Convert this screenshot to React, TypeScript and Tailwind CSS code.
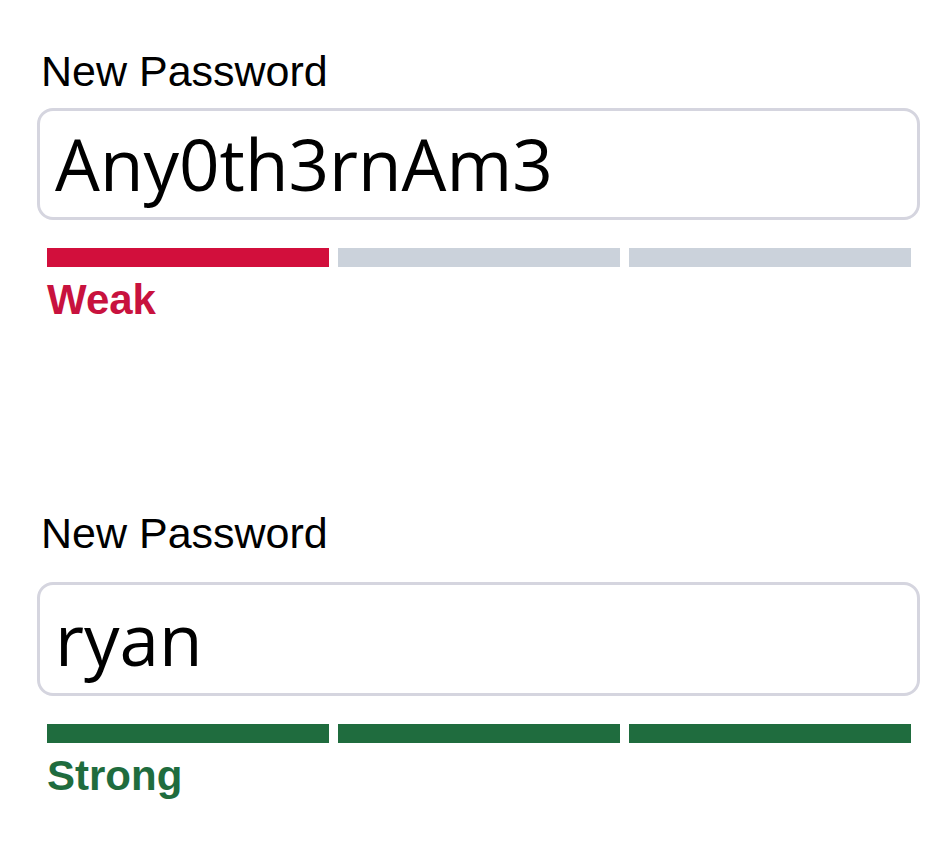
import React from "react";

type Strength = "weak" | "strong";

const levels: Record<Strength, { filled: number; label: string; bar: string; text: string }> = {
  weak: { filled: 1, label: "Weak", bar: "bg-[#d20f3c]", text: "text-[#c8123e]" },
  strong: { filled: 3, label: "Strong", bar: "bg-[#1f6c3e]", text: "text-[#1f6c3e]" },
};

const PasswordField: React.FC<{ value: string; strength: Strength; boxClass: string }> = ({
  value,
  strength,
  boxClass,
}) => {
  const lvl = levels[strength];
  return (
    <div className="flex flex-col">
      <label className="pl-[4px] text-[43px] leading-[48px] text-black [font-family:'Liberation_Sans',Arial,sans-serif]">
        New Password
      </label>
      <div
        className={`${boxClass} w-[883px] rounded-[16px] border-[3px] border-[#d5d5df] bg-white flex items-center pl-[15px]`}
      >
        <span className="text-[71px] text-black [font-family:'Open_Sans','Noto_Sans',sans-serif]">
          {value}
        </span>
      </div>
      <div className="mt-[28px] ml-[10px] flex gap-[9px]">
        {[0, 1, 2].map((i) => (
          <div
            key={i}
            className={`h-[19px] w-[282px] ${i < lvl.filled ? lvl.bar : "bg-[#cbd2db]"}`}
          />
        ))}
      </div>
      <span
        className={`ml-[10px] mt-[10px] text-[42px] leading-[46px] font-bold ${lvl.text} [font-family:'Liberation_Sans',Arial,sans-serif]`}
      >
        {lvl.label}
      </span>
    </div>
  );
};

export default function App() {
  return (
    <div className="min-h-[843px] w-[950px] bg-white pl-[37px] pt-[47px]">
      <div className="flex flex-col gap-[186px]">
        <PasswordField value="Any0th3rnAm3" strength="weak" boxClass="mt-[13px] h-[112px]" />
        <PasswordField value="ryan" strength="strong" boxClass="mt-[25px] h-[114px]" />
      </div>
    </div>
  );
}
